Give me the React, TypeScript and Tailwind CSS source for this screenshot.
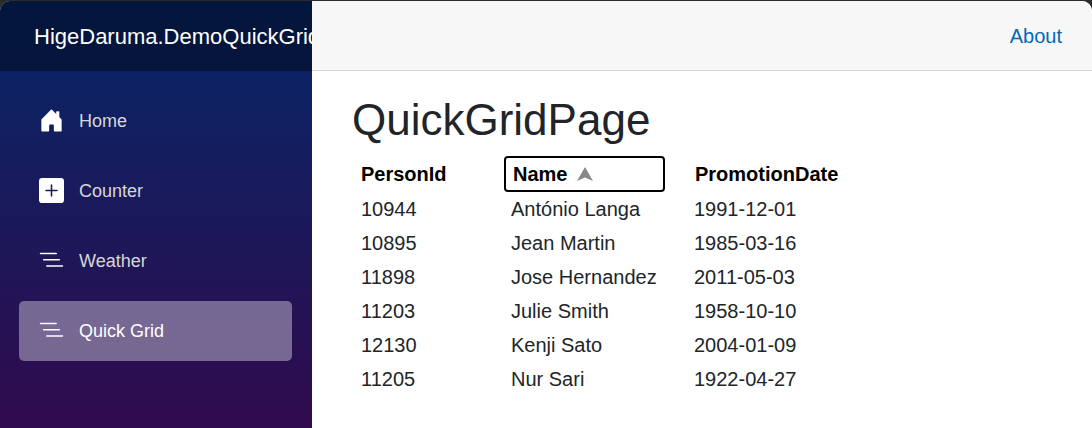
import { BsHouseDoorFill, BsListNested, BsPlusSquareFill } from "react-icons/bs";

const people = [
  { id: 10944, name: "António Langa", date: "1991-12-01" },
  { id: 10895, name: "Jean Martin", date: "1985-03-16" },
  { id: 11898, name: "Jose Hernandez", date: "2011-05-03" },
  { id: 11203, name: "Julie Smith", date: "1958-10-10" },
  { id: 12130, name: "Kenji Sato", date: "2004-01-09" },
  { id: 11205, name: "Nur Sari", date: "1922-04-27" },
];

const NavItem = ({ icon, label, active }: { icon: React.ReactNode; label: string; active?: boolean }) => (
  <a
    href="#"
    className={`flex h-[60px] items-center rounded-[5px] pl-5 text-[18px] ${
      active ? "bg-white/[0.37] text-white" : "text-[#d7d7d7]"
    }`}
  >
    <span className="-mt-[2px] flex w-[25px] justify-center text-white">{icon}</span>
    <span className="ml-[15px]">{label}</span>
  </a>
);

const App = () => {
  return (
    <div className="h-[428px] w-[1092px] overflow-hidden bg-[#2b2b2b] pt-px font-['Liberation_Sans',Arial,sans-serif]">
      <div className="flex h-[427px] overflow-hidden rounded-t-[10px] bg-white">
        <aside className="w-[312px] shrink-0 bg-linear-to-b/srgb from-[#052767] to-[#300b4e]">
          <div className="flex h-[70px] items-center overflow-hidden whitespace-nowrap bg-black/40 pl-[34px] text-[22px] text-white">
            HigeDaruma.DemoQuickGrid
          </div>
          <nav className="flex flex-col gap-[10px] pl-[19px] pr-5 pt-5">
            <NavItem icon={<BsHouseDoorFill size={25} />} label="Home" />
            <NavItem icon={<BsPlusSquareFill size={25} />} label="Counter" />
            <NavItem icon={<BsListNested size={25} />} label="Weather" />
            <NavItem icon={<BsListNested size={25} />} label="Quick Grid" active />
          </nav>
        </aside>
        <main className="min-w-0 flex-1">
          <div className="flex h-[70px] items-center justify-end border-b border-[#d6d5d5] bg-[#f7f7f7] pr-[30px]">
            <a href="#" className="text-[20px] text-[#006bb7]">
              About
            </a>
          </div>
          <div className="pl-10 pt-[24px]">
            <h1 className="text-[44px] leading-[50px] text-[#212529]">QuickGridPage</h1>
            <table className="mt-[11px] w-[530px] table-fixed border-collapse text-[20px] text-[#212529]">
              <thead>
                <tr className="h-[36px] text-left text-black">
                  <th className="w-[152px] pl-[9px] font-bold">PersonId</th>
                  <th className="w-[182px] p-0 font-bold">
                    <button className="flex h-[36px] w-[161px] items-center gap-[10px] rounded border-2 border-black pl-[7px] font-bold">
                      Name
                      <svg width="16" height="14" viewBox="0 0 16 14" className="text-[#888]">
                        <path d="M8 0L16 14L8 10.5L0 14Z" fill="currentColor" />
                      </svg>
                    </button>
                  </th>
                  <th className="pl-[9px] font-bold">PromotionDate</th>
                </tr>
              </thead>
              <tbody>
                {people.map((person) => (
                  <tr key={person.id} className="h-[34px]">
                    <td className="pl-[9px]">{person.id}</td>
                    <td className="pl-[7px]">{person.name}</td>
                    <td className="pl-[8px]">{person.date}</td>
                  </tr>
                ))}
              </tbody>
            </table>
          </div>
        </main>
      </div>
    </div>
  );
};

export default App;
